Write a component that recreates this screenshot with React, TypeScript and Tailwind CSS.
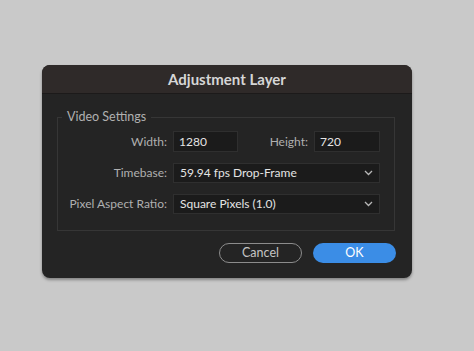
import React from "react";

function Chevron() {
  return (
    <svg width="9" height="6" viewBox="0 0 9 6" className="shrink-0">
      <path d="M1 1l3.5 3.5L8 1" fill="none" stroke="#b8b8b8" strokeWidth="1.3" />
    </svg>
  );
}

function Field({ value, className }: { value: string; className: string }) {
  return (
    <div className={`h-[21px] bg-[#1b1b1b] border border-[#2f2f2f] px-[5px] flex items-center text-[#e4e4e4] text-[12px] ${className}`}>
      {value}
    </div>
  );
}

function Select({ value }: { value: string }) {
  return (
    <div className="h-[20px] w-[207px] bg-[#1b1b1b] border border-[#2f2f2f] pl-[6px] pr-[6px] flex items-center justify-between text-[#e4e4e4] text-[12px]">
      <span>{value}</span>
      <Chevron />
    </div>
  );
}

export default function App() {
  return (
    <div className="w-[474px] h-[351px] bg-[#c9c9c9] pt-[65px] pl-[42px] text-[12px]" style={{ fontFamily: "Lato, 'Noto Sans', sans-serif" }}>
      <div className="w-[370px] h-[213px] rounded-[8px] overflow-hidden flex flex-col bg-[#242424] shadow-[0_2px_3px_rgba(0,0,0,0.35)]">
        <div className="h-[29px] shrink-0 bg-[#2f2a29] border-b border-[#1c1a1a] flex items-center justify-center">
          <span className="font-bold text-[15px] text-[#d6d6d6]">Adjustment Layer</span>
        </div>

        <fieldset className="mt-[15px] ml-[15px] mr-[17px] border border-[#363636] px-[4px] pb-[16px]">
          <legend className="px-[5px] text-[#b0b0b0] text-[12.5px] leading-[16px]">Video Settings</legend>

          <div className="mt-[6px] flex flex-col gap-[11px]">
            <div className="flex items-center">
              <span className="w-[105px] text-right text-[#b0b0b0] whitespace-nowrap">Width:</span>
              <Field value="1280" className="ml-[6px] w-[65px]" />
              <span className="w-[70px] text-right text-[#b0b0b0] whitespace-nowrap">Height:</span>
              <Field value="720" className="ml-[6px] w-[66px]" />
            </div>
            <div className="flex items-center">
              <span className="w-[105px] text-right text-[#b0b0b0] whitespace-nowrap">Timebase:</span>
              <div className="ml-[6px]"><Select value="59.94 fps Drop-Frame" /></div>
            </div>
            <div className="flex items-center">
              <span className="w-[105px] text-right text-[#b0b0b0] whitespace-nowrap">Pixel Aspect Ratio:</span>
              <div className="ml-[6px]"><Select value="Square Pixels (1.0)" /></div>
            </div>
          </div>
        </fieldset>

        <div className="mt-[12px] mr-[16px] flex justify-end gap-[11px]">
          <button className="w-[83px] h-[20px] rounded-full border-[1.5px] border-[#8c8c8c] text-[#c4c4c4] text-[12.5px] leading-none">Cancel</button>
          <button className="w-[83px] h-[20px] rounded-full bg-[#3b8de6] text-white text-[12.5px] leading-none">OK</button>
        </div>
      </div>
    </div>
  );
}
